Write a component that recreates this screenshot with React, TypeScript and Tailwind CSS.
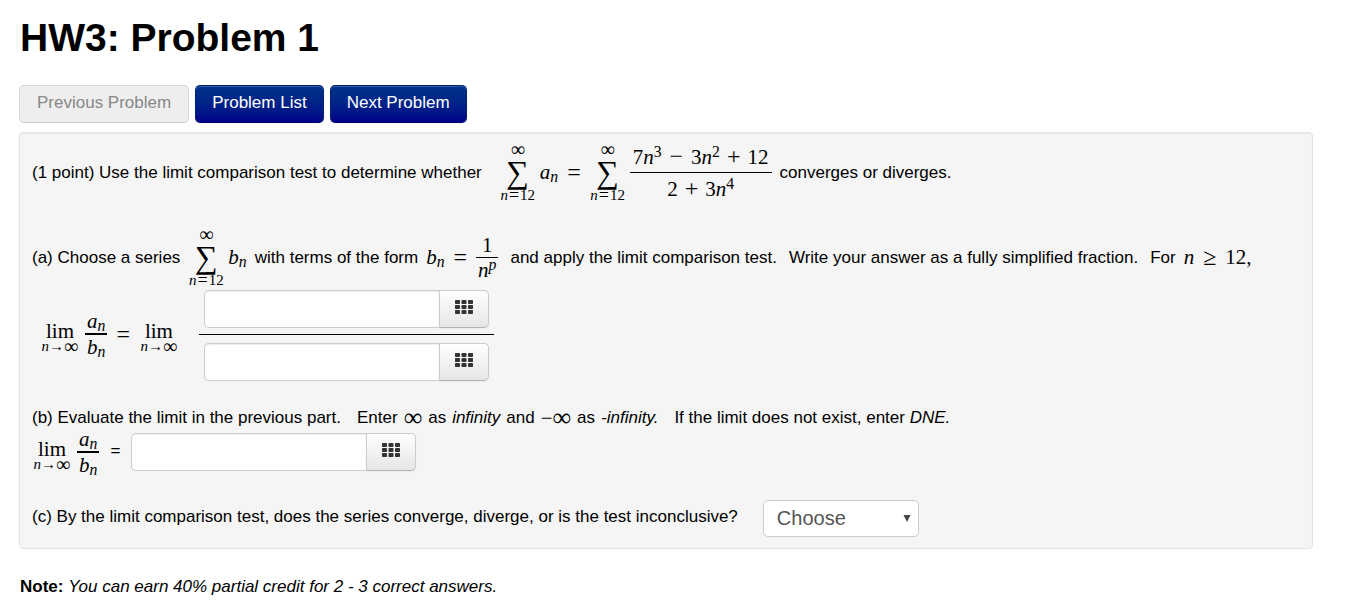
import React, { useState } from 'react';

interface ChildrenProps {
  children: React.ReactNode;
  className?: string;
}

const Var: React.FC<{ name: string; sub?: string; sup?: string }> = ({ name, sub, sup }) => (
  <span className="whitespace-nowrap">
    <i>{name}</i>
    {sub && <sub className="-bottom-[3px] italic">{sub}</sub>}
    {sup && <sup className={`-top-[7px] ${/\d/.test(sup) ? '' : 'italic'}`}>{sup}</sup>}
  </span>
);

const MathText: React.FC<ChildrenProps> = ({ children, className = '' }) => (
  <span
    className={`inline-flex shrink-0 items-center font-['Liberation_Serif',serif] text-[21px] leading-6 whitespace-nowrap ${className}`}
  >
    {children}
  </span>
);

const Op: React.FC<ChildrenProps> = ({ children, className = 'mx-[9px]' }) => (
  <span className={`text-[24px] leading-6 ${className}`}>{children}</span>
);

const Fraction: React.FC<{ top: React.ReactNode; bottom: React.ReactNode; thick?: boolean; wide?: boolean }> = ({
  top,
  bottom,
  thick = false,
  wide = false
}) => (
  <span className="inline-flex flex-col items-stretch text-center">
    <span className={wide ? 'px-[3px] pb-[3px]' : 'px-0.5'}>{top}</span>
    <span className={`bg-black ${thick ? 'h-[2px]' : 'h-px'}`} />
    <span className={wide ? 'px-[3px] pt-[3px]' : 'px-0.5'}>{bottom}</span>
  </span>
);

const Sum: React.FC = () => (
  <span className="inline-flex w-9 flex-col items-center">
    <span className="h-4 text-[20px] leading-4">∞</span>
    <span className="h-[30px] text-[32px] leading-[30px]">∑</span>
    <span className="flex h-4 items-center text-[15px] leading-4">
      <i>n</i>
      <span className="mx-px text-[18px] leading-4">=</span>12
    </span>
  </span>
);

const Limit: React.FC = () => (
  <span className="inline-flex w-10 shrink-0 flex-col items-center pt-1.5">
    <span className="h-[18px] leading-[18px]">lim</span>
    <span className="flex h-3 items-center text-[15px] leading-3">
      <i>n</i>
      <span>→</span>
      <span className="text-[20px] leading-3">∞</span>
    </span>
  </span>
);

const KeypadIcon: React.FC = () => (
  <svg width="18" height="14" viewBox="0 0 18 14" fill="#333" aria-hidden="true">
    {[0, 5, 10].map((y) =>
      [0, 6.5, 13].map((x) => <rect key={`${x}-${y}`} x={x} y={y} width="5" height="4" rx="0.8" />)
    )}
  </svg>
);

const AnswerBox: React.FC<{ label: string }> = ({ label }) => {
  const [value, setValue] = useState('');

  return (
    <div className="flex h-[38px]">
      <input
        type="text"
        aria-label={label}
        value={value}
        onChange={(e) => setValue(e.target.value)}
        className="w-[235px] rounded-l-[5px] border border-r-0 border-[#ccc] bg-white px-2 text-[17px] shadow-[inset_0_1px_1px_rgba(0,0,0,0.075)] outline-none"
      />
      <button
        type="button"
        aria-label={`Open equation editor for ${label}`}
        className="flex w-[50px] items-center justify-center rounded-r-[5px] border border-[#ccc] border-b-[#b3b3b3] bg-linear-to-b from-white to-[#e6e6e6] pb-1 shadow-[0_1px_2px_rgba(0,0,0,0.05)]"
      >
        <KeypadIcon />
      </button>
    </div>
  );
};

const navButton =
  'h-[38px] rounded-[5px] border border-[#002277] border-b-[#000077] bg-linear-to-b from-[#003388] to-[#000088] px-4 pb-1 text-white shadow-[inset_0_1px_0_rgba(255,255,255,0.2),0_1px_2px_rgba(0,0,0,0.05)]';

export default function App() {
  const [choice, setChoice] = useState('');

  return (
    <main className="bg-white pr-8 pl-[19px] font-['Liberation_Sans',sans-serif] text-[17px] leading-[25px] text-black">
      <h1 className="pt-[13px] pl-px text-[39px] leading-[50px] font-bold">HW3: Problem 1</h1>

      <nav className="mt-[22px] flex gap-1.5">
        <button
          type="button"
          disabled
          className="h-[38px] rounded-[5px] border border-[#d9d9d9] border-b-[#c8c8c8] bg-[#eee] px-[17px] pb-1 text-[#888]"
        >
          Previous Problem
        </button>
        <button type="button" className={navButton}>
          Problem List
        </button>
        <button type="button" className={navButton}>
          Next Problem
        </button>
      </nav>

      <section className="mt-[9px] rounded-[4px] border border-[#e3e3e3] bg-[#f5f5f5] px-3 pt-2 pb-[11px] shadow-[inset_0_1px_1px_rgba(0,0,0,0.05)]">
        <div className="flex h-[62px] items-center">
          <span>(1 point) Use the limit comparison test to determine whether</span>
          <MathText className="ml-[18px]">
            <Sum />
            <span className="ml-1">
              <Var name="a" sub="n" />
            </span>
            <Op>=</Op>
            <Sum />
            <span className="ml-1">
              <Fraction
                wide
                top={
                  <>
                    7<Var name="n" sup="3" />
                    <Op className="mx-2">−</Op>3<Var name="n" sup="2" />
                    <Op className="mx-[7px]">+</Op>12
                  </>
                }
                bottom={
                  <>
                    2<Op className="mx-[7px]">+</Op>3<Var name="n" sup="4" />
                  </>
                }
              />
            </span>
          </MathText>
          <span className="ml-2">converges or diverges.</span>
        </div>

        <div className="mt-[23px] flex h-[62px] items-center">
          <span>(a) Choose a series</span>
          <MathText className="ml-2">
            <Sum />
            <span className="ml-1">
              <Var name="b" sub="n" />
            </span>
          </MathText>
          <span className="ml-2">with terms of the form</span>
          <MathText className="ml-2">
            <Var name="b" sub="n" />
            <Op>=</Op>
            <Fraction top="1" bottom={<Var name="n" sup="p" />} />
          </MathText>
          <div className="ml-3 flex gap-3">
            <span>and apply the limit comparison test.</span>
            <span>Write your answer as a fully simplified fraction.</span>
            <span>For</span>
          </div>
          <MathText className="ml-2">
            <Var name="n" />
            <Op>≥</Op>12,
          </MathText>
        </div>

        <div className="mt-0.5 flex items-center pl-2">
          <MathText className="pb-1">
            <Limit />
            <span className="ml-[5px]">
              <Fraction thick top={<Var name="a" sub="n" />} bottom={<Var name="b" sub="n" />} />
            </span>
            <Op>=</Op>
            <Limit />
          </MathText>
          <div className="ml-5 flex flex-col">
            <div className="px-[5px] pb-1.5">
              <AnswerBox label="numerator" />
            </div>
            <div className="h-px bg-black" />
            <div className="px-[5px] pt-2">
              <AnswerBox label="denominator" />
            </div>
          </div>
        </div>

        <div className="mt-6 flex items-center gap-4">
          <span>(b) Evaluate the limit in the previous part.</span>
          <span className="flex items-center gap-1.5">
            Enter
            <MathText className="text-[26px]">∞</MathText>
            as <em>infinity</em> and
            <MathText>
              −<span className="text-[26px]">∞</span>
            </MathText>
            as <em>-infinity.</em>
          </span>
          <span>
            If the limit does not exist, enter <em>DNE.</em>
          </span>
        </div>

        <div className="mt-[3px] flex h-[38px] items-center">
          <MathText>
            <Limit />
            <span className="ml-[5px]">
              <Fraction thick top={<Var name="a" sub="n" />} bottom={<Var name="b" sub="n" />} />
            </span>
          </MathText>
          <span className="mx-[11px] pb-1">=</span>
          <AnswerBox label="limit" />
        </div>

        <div className="mt-[29px] flex items-center">
          <label htmlFor="conclusion" className="pb-1">
            (c) By the limit comparison test, does the series converge, diverge, or is the test inconclusive?
          </label>
          <div className="relative ml-[25px]">
            <select
              id="conclusion"
              value={choice}
              onChange={(e) => setChoice(e.target.value)}
              className="h-[37px] w-[156px] appearance-none rounded-[5px] border border-[#ccc] bg-white px-[13px] pb-0.5 text-[20px] leading-6 text-[#555]"
            >
              <option value="">Choose</option>
              <option value="converge">converges</option>
              <option value="diverge">diverges</option>
              <option value="inconclusive">inconclusive</option>
            </select>
            <svg
              className="pointer-events-none absolute top-[15px] right-2"
              width="8"
              height="7"
              viewBox="0 0 8 7"
              fill="#444"
              aria-hidden="true"
            >
              <path d="M0.5 0h7L4 7z" />
            </svg>
          </div>
        </div>
      </section>

      <p className="mt-[25px] pl-px">
        <b>Note:</b> <em>You can earn 40% partial credit for 2 - 3 correct answers.</em>
      </p>
    </main>
  );
}
